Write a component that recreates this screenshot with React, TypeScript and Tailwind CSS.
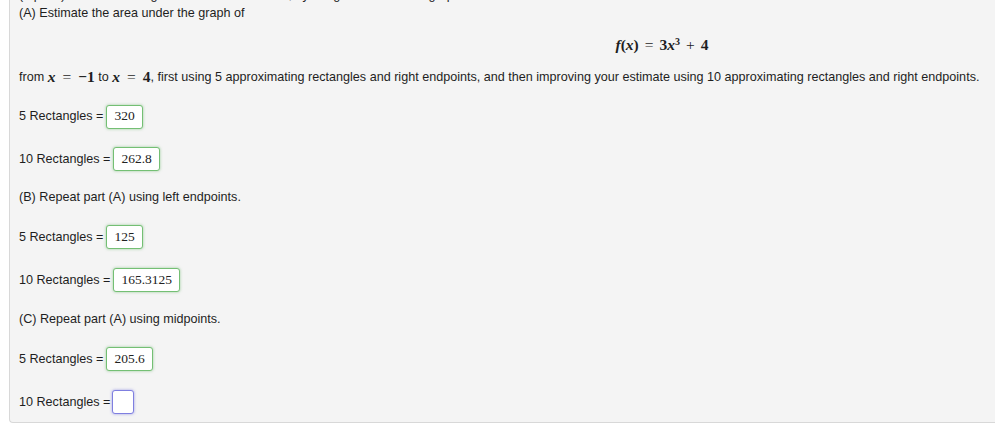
import React from 'react'

function MathX() {
    return <span className="font-bold italic">x</span>
}

function Eq() {
    return <span className="mx-[7px] font-normal not-italic">=</span>
}

function Answer({ value, empty }: { value?: string, empty?: boolean }) {
    if (empty) {
        return (
            <span className="ml-[2px] inline-block h-[24px] w-[22px] rounded-[3px] border border-[#7f7fe0] bg-white shadow-[0_0_3px_rgba(100,100,220,0.6)]"></span>
        )
    }
    return (
        <span className="ml-[3px] inline-flex h-[24px] items-center rounded-[3px] border border-[#74bf74] bg-white px-[7px] text-[13.5px] text-[#222] shadow-[0_0_3px_rgba(80,170,80,0.55)] [font-family:'Liberation_Serif',serif]">
            {value}
        </span>
    )
}

function Row({ children, className = '' }: { children?: React.ReactNode, className?: string }) {
    return <div className={`flex h-[24px] items-center whitespace-nowrap ${className}`}>{children}</div>
}

function App() {
    return (
        <div className="min-h-[429px] bg-white text-[12.6px] text-[#1e1e1e] [font-family:'Liberation_Sans',Arial,sans-serif]">
            <div className="ml-[9px] overflow-hidden rounded-bl-[4px] border-b border-l border-[#d8d8d8] bg-[#f4f4f4] pb-[8px] pl-[9px]">
                <Row className="-mt-[17px]">(1 point) Use the rectangles to estimate the area, by the given function of graph</Row>
                <Row className="-mt-[6px]">(A) Estimate the area under the graph of</Row>

                <Row className="mt-[8px] justify-center pl-[310px]">
                    <span className="text-[15.5px] [font-family:'Liberation_Serif',serif]">
                        <span className="font-bold italic">f</span>
                        <span className="font-bold">(</span>
                        <span className="font-bold italic">x</span>
                        <span className="font-bold">)</span>
                        <span className="mx-[6px]">=</span>
                        <span className="font-bold">3</span>
                        <span className="font-bold italic">x</span>
                        <sup className="text-[10px] font-bold">3</sup>
                        <span className="mx-[6px]">+</span>
                        <span className="font-bold">4</span>
                    </span>
                </Row>

                <Row className="mt-[8px]">
                    from&nbsp;
                    <span className="text-[15.5px] [font-family:'Liberation_Serif',serif]">
                        <MathX /><Eq /><span className="font-bold">−1</span>
                    </span>
                    &nbsp;to&nbsp;
                    <span className="text-[15.5px] [font-family:'Liberation_Serif',serif]">
                        <MathX /><Eq /><span className="font-bold">4</span>
                    </span>
                    , first using 5 approximating rectangles and right endpoints, and then improving your estimate using 10 approximating rectangles and right endpoints.
                </Row>

                <Row className="mt-[15.5px]">5 Rectangles = <Answer value="320" /></Row>
                <Row className="mt-[18.5px]">10 Rectangles = <Answer value="262.8" /></Row>

                <Row className="mt-[14px]">(B) Repeat part (A) using left endpoints.</Row>
                <Row className="mt-[16px]">5 Rectangles = <Answer value="125" /></Row>
                <Row className="mt-[19px]">10 Rectangles = <Answer value="165.3125" /></Row>

                <Row className="mt-[15px]">(C) Repeat part (A) using midpoints.</Row>
                <Row className="mt-[16px]">5 Rectangles = <Answer value="205.6" /></Row>
                <Row className="mt-[19px]">10 Rectangles = <Answer empty /></Row>
            </div>
        </div>
    )
}

export default App
